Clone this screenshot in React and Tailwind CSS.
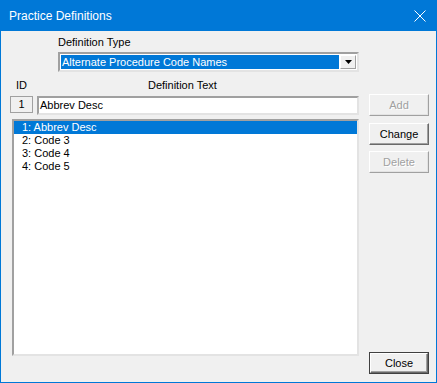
export default function App() {
  const items = ["1: Abbrev Desc", "2: Code 3", "3: Code 4", "4: Code 5"];

  return (
    <div className="w-[437px] h-[383px] flex flex-col bg-[#0078d7] font-['Liberation_Sans',Arial,sans-serif] text-[11px] text-black">

      {/* Title bar */}
      <div className="h-[31px] flex items-center justify-between pl-[9px] pr-[10px] text-white text-[12px]">
        <span>Practice Definitions</span>
        <svg width="12" height="12" viewBox="0 0 12 12" className="mr-[1px]">
          <path d="M0.5 0.5 L11.5 11.5 M11.5 0.5 L0.5 11.5" stroke="#fff" strokeWidth="1" fill="none" />
        </svg>
      </div>

      {/* Body */}
      <div className="flex-1 mx-px mb-px bg-[#f0f0f0] flex flex-col leading-[13px]">

        {/* Definition Type */}
        <div className="ml-[57px] mt-[5px]">Definition Type</div>
        <div className="ml-[57px] mt-[3px] w-[301px] h-[20px] flex border-2 border-t-[#a0a0a0] border-l-[#a0a0a0] border-r-[#e3e3e3] border-b-[#e3e3e3] bg-white p-px">
          <div className="flex-1 bg-[#0078d7] text-white pl-px flex items-center">
            Alternate Procedure Code Names
          </div>
          <div className="w-[16px] ml-px bg-[#f0f0f0] flex items-center justify-center border border-t-[#fff] border-l-[#fff] border-r-[#a0a0a0] border-b-[#a0a0a0]">
            <svg width="7" height="4" viewBox="0 0 7 4">
              <path d="M0 0 H7 L3.5 4 Z" fill="#000" />
            </svg>
          </div>
        </div>

        {/* Column labels */}
        <div className="flex mt-[7px]">
          <div className="ml-[15px] w-[132px]">ID</div>
          <div>Definition Text</div>
        </div>

        {/* Main area */}
        <div className="flex flex-1">

          {/* Left side */}
          <div className="ml-[9px] w-[349px] flex flex-col">
            <div className="flex mt-[4px] gap-[4px]">
              <div className="w-[23px] h-[17px] border border-[#a0a0a0] flex items-center justify-center">1</div>
              <div className="w-[322px] h-[19px] bg-white border-2 border-t-[#a0a0a0] border-l-[#a0a0a0] border-r-[#e3e3e3] border-b-[#e3e3e3] flex items-center pl-px">
                Abbrev Desc
              </div>
            </div>

            <div className="ml-[2px] mt-[4px] w-[347px] h-[237px] bg-white border-2 border-t-[#a0a0a0] border-l-[#a0a0a0] border-r-[#e3e3e3] border-b-[#e3e3e3]">
              {items.map((item, i) => (
                <div
                  key={item}
                  className={
                    i === 0
                      ? "h-[13px] pl-[8px] bg-[#0078d7] text-white"
                      : "h-[13px] pl-[8px]"
                  }
                >
                  {item}
                </div>
              ))}
            </div>
          </div>

          {/* Buttons */}
          <div className="ml-[10px] w-[60px] flex flex-col">
            <div className="mt-[2px] h-[22px] flex items-center justify-center text-[#a0a0a0] [text-shadow:1px_1px_0_#fff] border border-t-white border-l-white border-r-[#a0a0a0] border-b-[#a0a0a0] shadow-[inset_-1px_-1px_0_#e3e3e3]">
              Add
            </div>
            <div className="mt-[7px] h-[22px] flex items-center justify-center border border-t-white border-l-white border-r-[#696969] border-b-[#696969] shadow-[inset_-1px_-1px_0_#a0a0a0]">
              Change
            </div>
            <div className="mt-[6px] h-[22px] flex items-center justify-center text-[#a0a0a0] [text-shadow:1px_1px_0_#fff] border border-t-white border-l-white border-r-[#a0a0a0] border-b-[#a0a0a0] shadow-[inset_-1px_-1px_0_#e3e3e3]">
              Delete
            </div>
            <div className="mt-auto mb-[8px] h-[22px] border border-[#404040]">
              <div className="h-full flex items-center justify-center border border-t-white border-l-white border-r-[#696969] border-b-[#696969] shadow-[inset_-1px_-1px_0_#a0a0a0]">
                Close
              </div>
            </div>
          </div>
        </div>
      </div>
    </div>
  );
}
